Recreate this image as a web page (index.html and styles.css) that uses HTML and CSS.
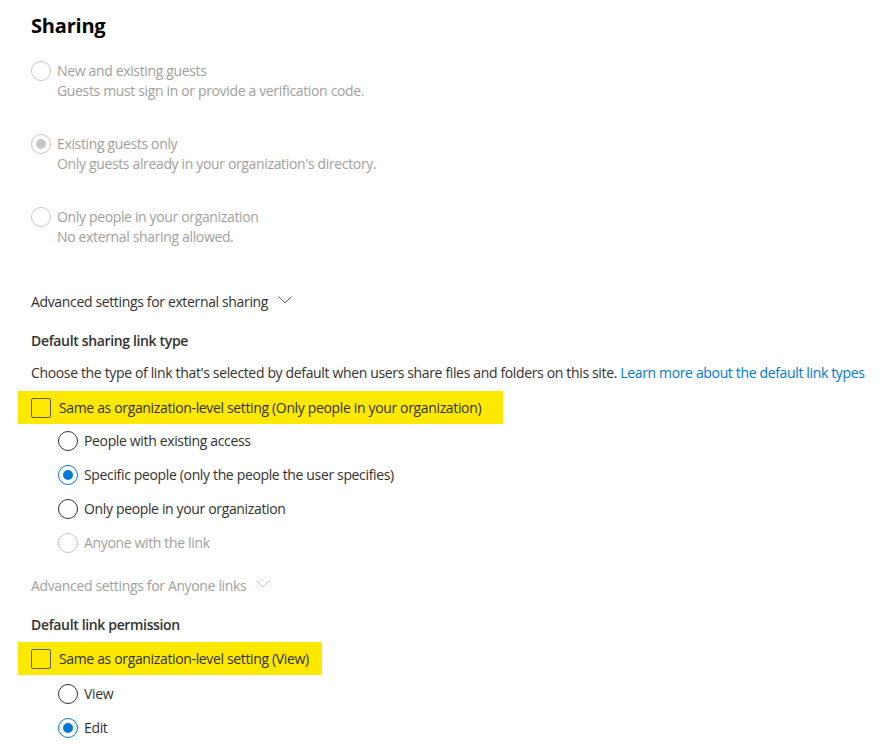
FILE: index.html
```html
<!DOCTYPE html>
<html lang="en">
<head>
  <meta charset="UTF-8">
  <title>Sharing</title>
  <link rel="stylesheet" href="styles.css">
</head>
<body>
<div class="panel">
  <h2 class="title">Sharing</h2>

  <div class="guest-options">
    <div class="option disabled">
      <span class="radio"></span>
      <div class="option-text">
        <div class="option-label">New and existing guests</div>
        <div class="option-desc">Guests must sign in or provide a verification code.</div>
      </div>
    </div>
    <div class="option disabled">
      <span class="radio checked"></span>
      <div class="option-text">
        <div class="option-label">Existing guests only</div>
        <div class="option-desc">Only guests already in your organization's directory.</div>
      </div>
    </div>
    <div class="option disabled">
      <span class="radio"></span>
      <div class="option-text">
        <div class="option-label">Only people in your organization</div>
        <div class="option-desc">No external sharing allowed.</div>
      </div>
    </div>
  </div>

  <div class="expander first">
    Advanced settings for external sharing
    <svg width="14" height="8" viewBox="0 0 14 8"><polyline points="0.5,0.5 7,7 13.5,0.5" fill="none" stroke="#605e5c" stroke-width="1"/></svg>
  </div>

  <div class="section-title">Default sharing link type</div>
  <p class="section-text">Choose the type of link that's selected by default when users share files and folders on this site. <a href="#">Learn more about the default link types</a></p>

  <div class="highlight wide">
    <span class="checkbox"></span>
    <span>Same as organization-level setting (Only people in your organization)</span>
  </div>

  <div class="choices">
    <div class="choice"><span class="radio"></span>People with existing access</div>
    <div class="choice"><span class="radio checked"></span>Specific people (only the people the user specifies)</div>
    <div class="choice"><span class="radio"></span>Only people in your organization</div>
    <div class="choice disabled"><span class="radio"></span>Anyone with the link</div>
  </div>

  <div class="expander disabled">
    Advanced settings for Anyone links
    <svg width="14" height="8" viewBox="0 0 14 8"><polyline points="0.5,0.5 7,7 13.5,0.5" fill="none" stroke="#c8c6c4" stroke-width="1"/></svg>
  </div>

  <div class="section-title">Default link permission</div>

  <div class="highlight narrow">
    <span class="checkbox"></span>
    <span>Same as organization-level setting (View)</span>
  </div>

  <div class="choices last">
    <div class="choice"><span class="radio"></span>View</div>
    <div class="choice"><span class="radio checked"></span>Edit</div>
  </div>
</div>
</body>
</html>
```

FILE: styles.css
```css
body {
  margin: 0;
  background: #fff;
  font-family: "Open Sans", "Noto Sans", sans-serif;
  font-size: 14px;
  letter-spacing: -0.35px;
  color: #323130;
}
.panel {
  padding: 12px 0 0 31px;
}
.title {
  margin: 0;
  font-size: 20px;
  line-height: 28px;
  font-weight: 700;
  letter-spacing: -0.2px;
  color: #000;
}
.guest-options {
  margin-top: 21px;
  display: flex;
  flex-direction: column;
  gap: 34px;
}
.option {
  display: flex;
  gap: 6px;
}
.option-label {
  line-height: 20px;
}
.option-desc {
  line-height: 19px;
}
.disabled {
  color: #a19f9d;
}
.radio {
  flex: none;
  box-sizing: border-box;
  width: 20px;
  height: 20px;
  border: 1px solid #323130;
  border-radius: 50%;
  display: flex;
  align-items: center;
  justify-content: center;
  background: #fff;
}
.radio.checked {
  border-color: #0078d4;
}
.radio.checked::after {
  content: '';
  width: 10px;
  height: 10px;
  border-radius: 50%;
  background: #0078d4;
}
.disabled .radio {
  border-color: #c8c6c4;
}
.disabled .radio.checked::after {
  background: #c8c6c4;
}
.expander {
  display: flex;
  align-items: center;
  gap: 10px;
  line-height: 20px;
  margin-top: 23px;
}
.expander.first {
  margin-top: 46px;
}
.expander svg {
  margin-top: -4px;
}
.section-title {
  font-weight: 600;
  line-height: 20px;
  margin-top: 19px;
}
.section-text {
  margin: 12px 0 0;
  line-height: 20px;
  white-space: nowrap;
}
.section-text a {
  color: #0078d4;
  text-decoration: none;
}
.highlight {
  display: flex;
  align-items: center;
  gap: 8px;
  background: #fde800;
  margin-left: -13px;
  padding-left: 13px;
  height: 33px;
  box-sizing: border-box;
  white-space: nowrap;
}
.highlight.wide {
  width: 485px;
  margin-top: 8px;
}
.highlight.narrow {
  width: 304px;
  margin-top: 7px;
}
.checkbox {
  flex: none;
  box-sizing: border-box;
  width: 20px;
  height: 20px;
  border: 1px solid #605e5c;
  border-radius: 2px;
}
.choices {
  margin: 7px 0 0 27px;
  display: flex;
  flex-direction: column;
  gap: 14px;
}
.choices.last {
  margin-top: 9px;
}
.choice {
  display: flex;
  align-items: center;
  gap: 6px;
  line-height: 20px;
}
```
